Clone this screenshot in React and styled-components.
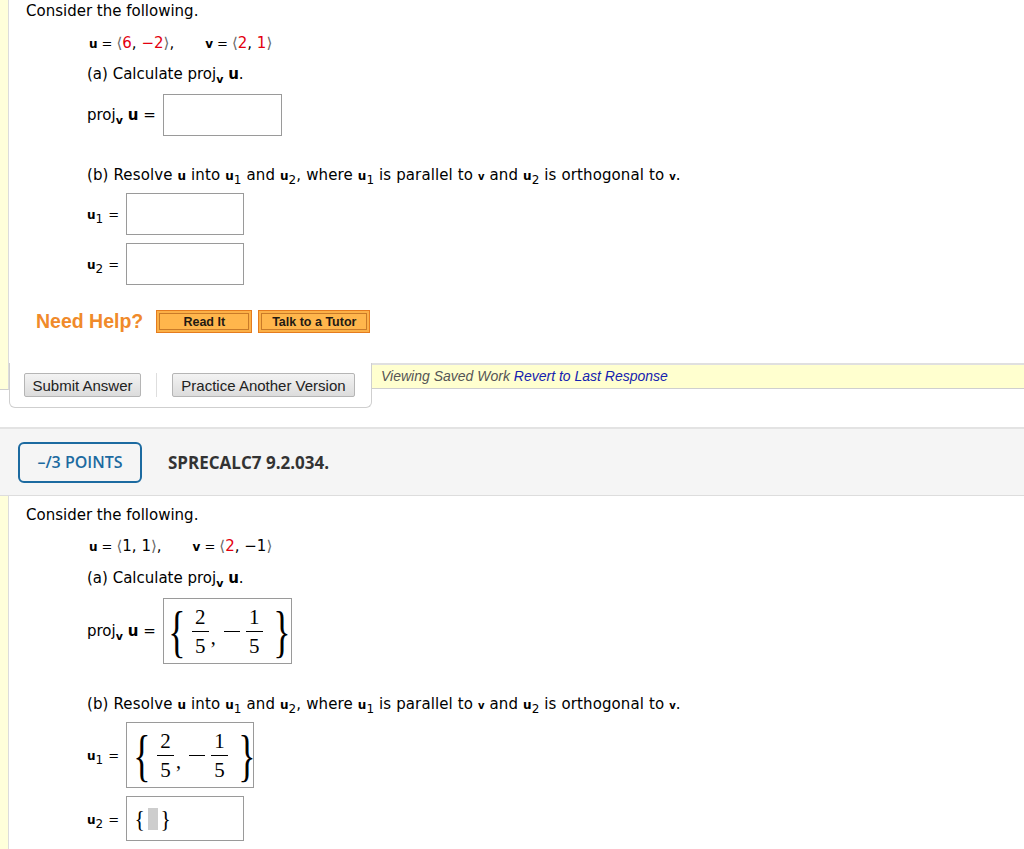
import React from 'react';
import styled, { createGlobalStyle } from 'styled-components';

const GlobalStyle = createGlobalStyle`
  html, body {
    margin: 0;
    padding: 0;
    overflow: hidden;
    background: #fff;
  }
  body {
    font-family: "DejaVu Sans", Verdana, sans-serif;
    font-size: 15px;
    color: #000;
  }
`;

const Page = styled.div`
  width: 1024px;
  height: 849px;
  overflow: hidden;
`;

const QuestionBlock = styled.div`
  display: flex;
  align-items: stretch;
  min-height: ${p => p.$minHeight || 0}px;
`;

const Strip = styled.div`
  width: 8px;
  flex: none;
  background: #ffffda;
  border-right: 1px solid #dcdcdc;
  margin-bottom: ${p => (p.$cut ? 18 : 0)}px;
  border-bottom: ${p => (p.$cut ? '1px solid #cfcfcf' : 'none')};
`;

const Main = styled.div`
  flex: 1;
  display: flex;
  flex-direction: column;
`;

const Body = styled.div`
  padding: ${p => p.$top}px 0 0 17px;
`;

const Intro = styled.div`
  line-height: 20px;
  height: 20px;
`;

const Indent = styled.div`
  margin-left: 61px;
  margin-top: ${p => p.$mt || 0}px;
`;

const Line = styled.div`
  line-height: 20px;
  height: 20px;
  white-space: nowrap;
`;

const PartLine = styled(Line)`
  letter-spacing: 0.12px;
`;

const VectorLine = styled(Line)`
  padding-left: 2px;
  display: flex;
  align-items: baseline;
  gap: 31px;
`;

const Vec = styled.b`
  font-weight: bold;
  font-size: ${p => p.$size || 12}px;
  line-height: 1;
`;

const Sub = styled.sub`
  font-size: ${p => p.$size || 12}px;
  font-weight: ${p => (p.$bold ? 'bold' : 'normal')};
  vertical-align: -4px;
  line-height: 0;
`;

const Eq = styled.span`
  font-size: 13px;
  line-height: 1;
  margin: 0 ${p => p.$mr ?? 4}px 0 ${p => p.$ml ?? 4}px;
`;

const Angle = styled.span`
  color: #666;
`;

const Num = styled.span`
  color: ${p => (p.$red ? '#e3000f' : '#000')};
`;

const AnswerRow = styled.div`
  display: flex;
  align-items: center;
  gap: 7px;
  margin-top: ${p => p.$mt || 0}px;
`;

const Label = styled.span`
  white-space: nowrap;
`;

const AnswerBox = styled.div`
  box-sizing: border-box;
  width: ${p => p.$w}px;
  height: ${p => p.$h}px;
  border: 1px solid #9a9a9a;
  background: #fff;
  display: flex;
  align-items: center;
  padding-left: ${p => p.$pl || 0}px;
`;

const Brace = styled.span`
  flex: none;
  display: inline-flex;
  justify-content: center;
  width: ${p => p.$w || 12}px;
  margin-left: ${p => p.$ml || 0}px;
  font-family: "Liberation Serif", "Times New Roman", serif;
  font-size: ${p => p.$size || 58}px;
  line-height: 1;
  margin-top: ${p => p.$mt ?? 2}px;
  & > span {
    display: inline-block;
    transform: scaleX(${p => p.$sx || 0.62});
  }
`;

const Frac = styled.span`
  flex: none;
  display: inline-flex;
  flex-direction: column;
  align-items: center;
  font-family: "Liberation Serif", "Times New Roman", serif;
  font-size: 21px;
  line-height: 24px;
  margin-left: ${p => p.$ml || 0}px;
`;

const FracBar = styled.span`
  display: block;
  width: 17px;
  height: 1px;
  background: #000;
  margin: 2px 0 2px;
`;

const Comma = styled.span`
  flex: none;
  font-family: "Liberation Serif", "Times New Roman", serif;
  font-size: 20px;
  margin: 12px 0 0 2px;
`;

const Minus = styled.span`
  flex: none;
  display: inline-block;
  width: 16px;
  height: 1px;
  background: #000;
  margin: 0 6px 0 8px;
`;

const Placeholder = styled.span`
  flex: none;
  display: inline-block;
  width: 10px;
  height: 22px;
  background: #cdcdcd;
  margin: 0 3px;
`;

const HelpRow = styled.div`
  display: flex;
  align-items: center;
  margin: 25px 0 0 10px;
`;

const NeedHelp = styled.span`
  font-family: "Liberation Sans", Arial, sans-serif;
  font-weight: bold;
  font-size: 19.5px;
  color: #f08a2a;
  margin-right: 13px;
`;

const HelpButton = styled.button`
  box-sizing: border-box;
  width: ${p => p.$w}px;
  height: 23px;
  margin-right: 6px;
  padding: 0;
  background: #ffb64c;
  border: 1px solid #e57c1e;
  box-shadow: inset 0 0 0 2px #fbb047, inset 0 0 0 3px #c97a28;
  font-family: "Liberation Sans", Arial, sans-serif;
  font-weight: bold;
  font-size: 12.5px;
  color: #1f1a14;
  cursor: pointer;
`;

const FooterRow = styled.div`
  display: flex;
  align-items: flex-start;
  margin-top: 30px;
`;

const ActionBox = styled.div`
  box-sizing: border-box;
  width: 363px;
  margin-left: -17px;
  flex: none;
  display: flex;
  align-items: center;
  gap: 15px;
  padding: 10px 0 10px 14px;
  border: 1px solid #cfcfcf;
  border-top: none;
  border-radius: 0 0 6px 6px;
  background: #fff;
`;

const GrayButton = styled.button`
  box-sizing: border-box;
  height: 24px;
  width: ${p => p.$w}px;
  padding: 0;
  border: 1px solid #b5b5b5;
  border-radius: 2px;
  background: linear-gradient(#f3f3f3, #dcdcdc);
  font-family: "Liberation Sans", Arial, sans-serif;
  font-size: 15px;
  color: #222;
  cursor: pointer;
`;

const Divider = styled.span`
  width: 1px;
  height: 24px;
  background: #dedede;
`;

const SavedBar = styled.div`
  flex: 1;
  box-sizing: border-box;
  height: 26px;
  background: #ffffcf;
  border-top: 2px solid #e0e0e0;
  border-bottom: 1px solid #cfcfcf;
  padding-left: 9px;
  font-family: "Liberation Sans", Arial, sans-serif;
  font-style: italic;
  font-size: 14px;
  line-height: 22px;
  color: #555;
  white-space: nowrap;
`;

const RevertLink = styled.a`
  color: #1522b0;
  text-decoration: none;
`;

const HeaderBar = styled.div`
  margin-top: 19px;
  box-sizing: border-box;
  height: 69px;
  background: #f5f5f5;
  border-top: 2px solid #e3e3e3;
  border-bottom: 1px solid #dddddd;
  display: flex;
  align-items: center;
  padding-left: 18px;
  gap: 26px;
`;

const PointsBadge = styled.div`
  box-sizing: border-box;
  width: 124px;
  height: 41px;
  border: 2px solid #1c6aa0;
  border-radius: 6px;
  display: flex;
  align-items: center;
  justify-content: center;
  font-family: "Open Sans", sans-serif;
  font-weight: 600;
  font-size: 16px;
  color: #1c6aa0;
`;

const ProblemId = styled.div`
  font-family: "Open Sans", sans-serif;
  font-weight: 700;
  font-size: 17px;
  color: #333;
`;

const Vector = ({ name, parts }) => (
  <span>
    <Vec $size={12}>{name}</Vec>
    <Eq>=</Eq>
    <Angle>⟨</Angle>
    {parts.map((p, i) => (
      <React.Fragment key={i}>
        {i > 0 && ', '}
        <Num $red={p.red}>{p.v}</Num>
      </React.Fragment>
    ))}
    <Angle>⟩</Angle>
  </span>
);

const ProjLabel = () => (
  <Label>
    proj<Sub $bold $size={11}>v</Sub> <Vec $size={15}>u</Vec> =
  </Label>
);

const VecLabel = ({ n }) => (
  <Label>
    <Vec $size={12}>u</Vec>
    <Sub>{n}</Sub>
    <Eq $ml={5} $mr={0}>=</Eq>
  </Label>
);

const PartB = ({ mt }) => (
  <Indent $mt={mt}>
    <PartLine>
      (b) Resolve <Vec>u</Vec> into <Vec>u</Vec><Sub>1</Sub> and <Vec>u</Vec>
      <Sub>2</Sub>, where <Vec>u</Vec><Sub>1</Sub> is parallel to <Vec $size={10}>v</Vec> and{' '}
      <Vec>u</Vec><Sub>2</Sub> is orthogonal to <Vec $size={10}>v</Vec>.
    </PartLine>
  </Indent>
);

const PartA = () => (
  <Line>
    (a) Calculate proj<Sub $bold $size={11}>v</Sub> <Vec $size={15}>u</Vec>.
  </Line>
);

const FracAnswer = () => (
  <>
    <Brace><span>{'{'}</span></Brace>
    <Frac $ml={9}>
      <span>2</span>
      <FracBar />
      <span>5</span>
    </Frac>
    <Comma>,</Comma>
    <Minus />
    <Frac>
      <span>1</span>
      <FracBar />
      <span>5</span>
    </Frac>
    <Brace $ml={13}><span>{'}'}</span></Brace>
  </>
);

export default function App() {
  return (
    <Page>
      <GlobalStyle />
      <QuestionBlock>
        <Strip $cut />
        <Main>
          <Body $top={1}>
            <Intro>Consider the following.</Intro>
            <Indent $mt={12}>
              <VectorLine>
                <span>
                  <Vector name="u" parts={[{ v: '6', red: true }, { v: '−2', red: true }]} />,
                </span>
                <Vector name="v" parts={[{ v: '2', red: true }, { v: '1', red: true }]} />
              </VectorLine>
            </Indent>
            <Indent $mt={11}>
              <PartA />
              <AnswerRow $mt={10}>
                <ProjLabel />
                <AnswerBox $w={119} $h={42} />
              </AnswerRow>
            </Indent>
            <PartB mt={29} />
            <Indent>
              <AnswerRow $mt={8}>
                <VecLabel n={1} />
                <AnswerBox $w={118} $h={42} />
              </AnswerRow>
              <AnswerRow $mt={8}>
                <VecLabel n={2} />
                <AnswerBox $w={118} $h={42} />
              </AnswerRow>
            </Indent>
            <HelpRow>
              <NeedHelp>Need Help?</NeedHelp>
              <HelpButton $w={96}>Read It</HelpButton>
              <HelpButton $w={112}>Talk to a Tutor</HelpButton>
            </HelpRow>
            <FooterRow>
              <ActionBox>
                <GrayButton $w={117}>Submit Answer</GrayButton>
                <Divider />
                <GrayButton $w={183}>Practice Another Version</GrayButton>
              </ActionBox>
              <SavedBar>
                Viewing Saved Work <RevertLink href="#">Revert to Last Response</RevertLink>
              </SavedBar>
            </FooterRow>
          </Body>
        </Main>
      </QuestionBlock>

      <HeaderBar>
        <PointsBadge>–/3 POINTS</PointsBadge>
        <ProblemId>SPRECALC7 9.2.034.</ProblemId>
      </HeaderBar>

      <QuestionBlock $minHeight={360}>
        <Strip />
        <Main>
          <Body $top={9}>
            <Intro>Consider the following.</Intro>
            <Indent $mt={11}>
              <VectorLine>
                <span>
                  <Vector name="u" parts={[{ v: '1' }, { v: '1' }]} />,
                </span>
                <Vector name="v" parts={[{ v: '2', red: true }, { v: '−1' }]} />
              </VectorLine>
            </Indent>
            <Indent $mt={12}>
              <PartA />
              <AnswerRow $mt={10}>
                <ProjLabel />
                <AnswerBox $w={129} $h={66} $pl={7}>
                  <FracAnswer />
                </AnswerBox>
              </AnswerRow>
            </Indent>
            <PartB mt={30} />
            <Indent>
              <AnswerRow $mt={8}>
                <VecLabel n={1} />
                <AnswerBox $w={128} $h={66} $pl={9}>
                  <FracAnswer />
                </AnswerBox>
              </AnswerRow>
              <AnswerRow $mt={8}>
                <VecLabel n={2} />
                <AnswerBox $w={118} $h={45} $pl={8}>
                  <Brace $size={24} $sx={0.9} $w={10} $mt={0}><span>{'{'}</span></Brace>
                  <Placeholder />
                  <Brace $size={24} $sx={0.9} $w={10} $mt={0}><span>{'}'}</span></Brace>
                </AnswerBox>
              </AnswerRow>
            </Indent>
          </Body>
        </Main>
      </QuestionBlock>
    </Page>
  );
}
